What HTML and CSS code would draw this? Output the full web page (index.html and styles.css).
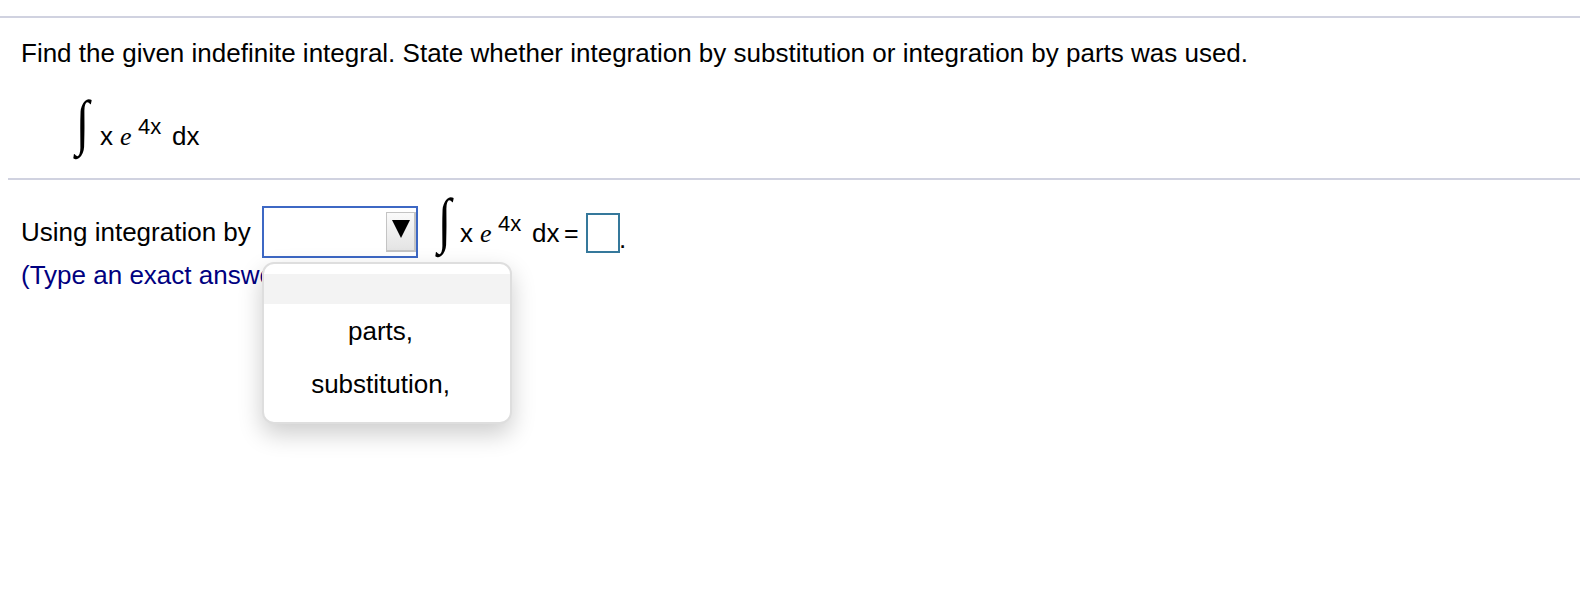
FILE: index.html
```html
<!DOCTYPE html>
<html lang="en">
<head>
    <meta charset="UTF-8">
    <title>Indefinite integral</title>
    <link rel="stylesheet" href="styles.css">
</head>
<body>
<div class="question">
    <p class="prompt">Find the given indefinite integral. State whether integration by substitution or integration by parts was used.</p>
    <div class="formula formulaMain">
        <span class="integral">∫</span>
        <span class="var">x</span>
        <span class="euler">e</span>
        <span class="power">4x</span>
        <span class="diff">dx</span>
    </div>
</div>
<div class="answer">
    <div class="answerRow">
        <span class="answerLabel">Using integration by</span>
        <div class="dropdown">
            <span class="dropBtn"><span class="dropArrow"></span></span>
        </div>
        <div class="formula">
            <span class="integral">∫</span>
            <span class="var">x</span>
            <span class="euler">e</span>
            <span class="power">4x</span>
            <span class="diff">dx</span>
            <span class="equals">=</span>
        </div>
        <span class="answerBox"></span>
        <span class="period">.</span>
    </div>
    <p class="hint">(Type an exact answer.)</p>
    <div class="menu">
        <div class="menuItem menuBlank"></div>
        <div class="menuItem">parts,</div>
        <div class="menuItem">substitution,</div>
    </div>
</div>
</body>
</html>
```

FILE: styles.css
```css
body,html,p,div{
    padding: 0;
    margin: 0;
}
html,body{
    height: 100%;
}
body{
    background: #fff;
    color: #000;
    font-family: "Liberation Sans", Arial, sans-serif;
    font-size: 26px;
}
.question{
    margin-top: 16px;
    border-top: 2px solid #d0d2e0;
    height: 162px;
    box-sizing: border-box;
    padding: 20px 0 0 21px;
}
.prompt{
    line-height: 30px;
    white-space: nowrap;
}
.formula{
    display: flex;
    align-items: baseline;
    height: 62px;
}
.formulaMain{
    margin: 26px 0 0 52px;
}
.integral{
    font-family: "Liberation Serif", serif;
    font-size: 61px;
    line-height: 62px;
    width: 27px;
    position: relative;
    top: -2px;
    transform: scaleX(.8);
}
.var{
    width: 20px;
}
.euler{
    font-family: "Liberation Serif", serif;
    font-style: italic;
    width: 18px;
}
.power{
    font-size: 22px;
    position: relative;
    top: -11px;
    width: 34px;
}
.diff{
    width: 32px;
}
.equals{
    font-size: 25px;
}
.answer{
    position: relative;
    border-top: 2px solid #d0d2e0;
    margin-left: 8px;
    padding: 21px 0 0 13px;
}
.answerRow{
    display: flex;
    align-items: center;
    height: 62px;
}
.answerLabel{
    width: 241px;
    white-space: nowrap;
}
.dropdown{
    width: 156px;
    height: 52px;
    box-sizing: border-box;
    border: 2px solid #3d68c4;
    display: flex;
    justify-content: flex-end;
    align-items: center;
    margin-right: 15px;
}
.dropBtn{
    width: 30px;
    height: 40px;
    box-sizing: border-box;
    background: linear-gradient(#fafafa, #e4e4e4);
    border: 2px solid #c4c4c4;
    border-width: 1px 2px 2px 1px;
    display: flex;
    justify-content: center;
    padding-top: 7px;
}
.dropArrow{
    width: 0;
    height: 0;
    border-left: 9px solid transparent;
    border-right: 9px solid transparent;
    border-top: 18px solid #000;
}
.answerRow .formula{
    width: 153px;
    align-self: flex-start;
    margin-top: -10px;
}
.answerRow .integral{
    top: -1px;
    left: 2px;
}
.answerBox{
    width: 34px;
    height: 40px;
    box-sizing: border-box;
    border: 2px solid #35789b;
    margin-top: 2px;
}
.period{
    align-self: flex-end;
    margin: 0 0 8px -1px;
}
.hint{
    color: #000080;
    line-height: 30px;
    margin-top: -3px;
    white-space: nowrap;
}
.menu{
    position: absolute;
    left: 254px;
    top: 82px;
    width: 250px;
    height: 162px;
    box-sizing: border-box;
    background: #fff;
    border: 2px solid #dedede;
    border-radius: 12px;
    padding: 10px 0 0;
    box-shadow: 0 10px 24px rgba(0,0,0,.2);
    text-align: center;
}
.menuItem{
    height: 53px;
    line-height: 54px;
    padding-right: 13px;
}
.menuBlank{
    height: 30px;
    padding-right: 0;
    background: #f3f3f3;
}
```
